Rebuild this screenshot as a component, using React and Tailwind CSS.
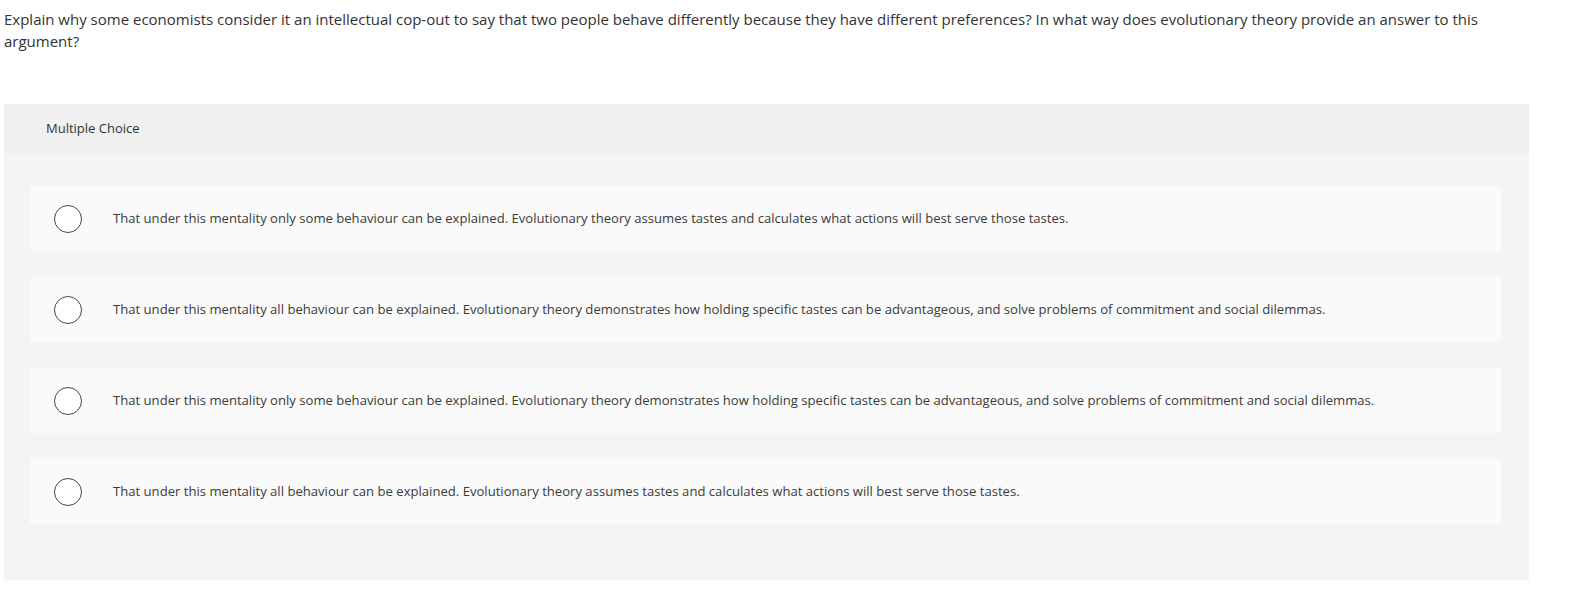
import React from 'react';

const options = [
  'That under this mentality only some behaviour can be explained. Evolutionary theory assumes tastes and calculates what actions will best serve those tastes.',
  'That under this mentality all behaviour can be explained. Evolutionary theory demonstrates how holding specific tastes can be advantageous, and solve problems of commitment and social dilemmas.',
  'That under this mentality only some behaviour can be explained. Evolutionary theory demonstrates how holding specific tastes can be advantageous, and solve problems of commitment and social dilemmas.',
  'That under this mentality all behaviour can be explained. Evolutionary theory assumes tastes and calculates what actions will best serve those tastes.',
];

export default function App() {
  return (
    <div className="bg-white min-h-[600px] font-['Open_Sans',sans-serif] text-[#333]">
      <div className="w-[1525px] pl-[4px]">
        <p className="text-[15px] leading-[22px] pt-[8px]">
          Explain why some economists consider it an intellectual cop-out to say that two people behave differently because they have different preferences? In what way does evolutionary theory provide an answer to this argument?
        </p>
      </div>

      <div className="ml-[4px] mt-[52px] w-[1525px] bg-[#f4f4f4]">
        <div className="h-[50px] bg-[#f0f0f0] flex items-center pl-[42px] text-[13px] text-[#333]">
          Multiple Choice
        </div>
        <div className="pt-[32px] pb-[56px] px-[26px] flex flex-col gap-[26px]">
          {options.map((text, i) => (
            <div key={i} className="h-[65px] bg-[#fafafa] flex items-center pl-[24px] w-[1471px]">
              <span className="w-[28px] h-[28px] rounded-full border-[1.5px] border-[#3d4a56] bg-white shrink-0" />
              <span className="ml-[31px] text-[13.1px] text-[#3a3a3a]">{text}</span>
            </div>
          ))}
        </div>
      </div>
    </div>
  );
}
